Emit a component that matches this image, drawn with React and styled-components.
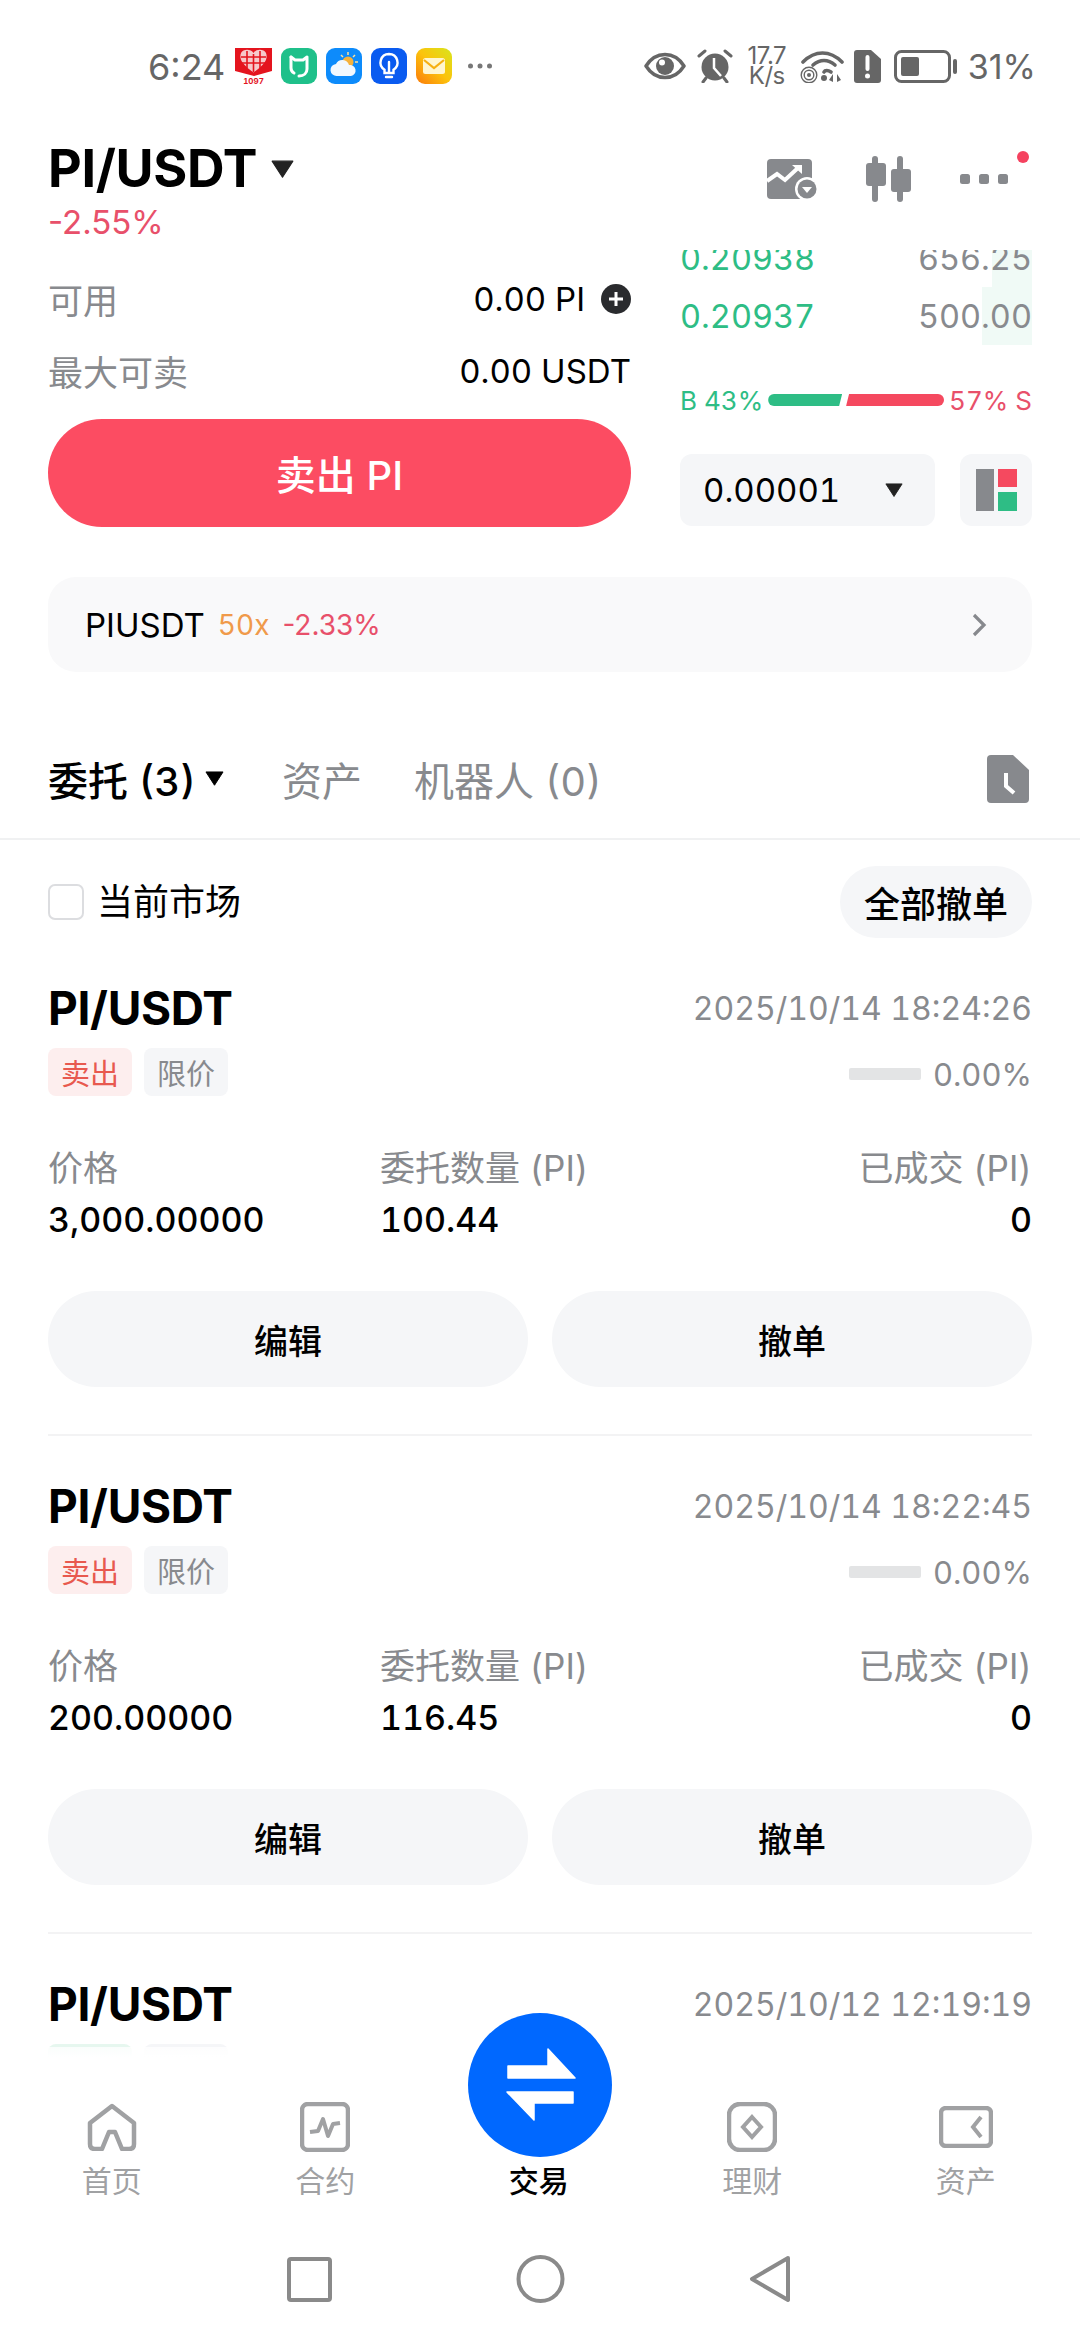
import React from 'react';
import styled, {createGlobalStyle} from 'styled-components';

const GlobalStyle = createGlobalStyle`
    html, body {
        margin: 0;
        padding: 0;
        background: #fff;
    }
    * {
        box-sizing: border-box;
    }
`;

const Page = styled.div`
    position: relative;
    width: 1080px;
    height: 2340px;
    overflow: hidden;
    background: #fff;
    color: #000;
    font-family: Inter, "Noto Sans CJK SC", sans-serif;
    font-variant-numeric: tabular-nums;
`;

const StatusBar = styled.div`
    height: 130px;
    padding: 47px 44px 0 148px;
    display: flex;
    justify-content: space-between;
    align-items: flex-start;
    color: #666;
`;

const StatusGroup = styled.div`
    display: flex;
    align-items: center;
    height: 38px;
    gap: ${p => p.$gap || 9}px;
`;

const Clock = styled.span`
    font-size: 36px;
    line-height: 38px;
    margin: 2px 1px 0 0;
    font-variant-numeric: normal;
`;

const NoticeMore = styled.span`
    display: flex;
    margin-left: 6px;
`;

const Speed = styled.span`
    font-size: 24px;
    line-height: 20px;
    width: 46px;
    text-align: center;
    white-space: nowrap;
    font-variant-numeric: normal;
    letter-spacing: -.5px;
`;

const SimSlot = styled.span`
    display: flex;
    margin-right: 3px;
`;

const BatteryText = styled.span`
    font-size: 34px;
    line-height: 38px;
    margin-top: 2px;
    font-variant-numeric: normal;
`;

const Header = styled.div`
    height: 120px;
    padding: 0 48px;
    display: flex;
    justify-content: space-between;
    align-items: flex-start;
`;

const PairBlock = styled.div`
    display: flex;
    flex-direction: column;
`;

const PairRow = styled.div`
    display: flex;
    align-items: center;
    gap: 14px;
    height: 50px;
    margin-top: 14px;
`;

const PairName = styled.span`
    font-size: 52px;
    font-weight: 700;
    letter-spacing: -.3px;
    line-height: 50px;
`;

const Change = styled.span`
    font-size: 33px;
    line-height: 40px;
    margin-top: 8px;
    color: #e8506a;
    font-variant-numeric: normal;
`;

const HeaderActions = styled.div`
    position: relative;
    display: flex;
    align-items: center;
    gap: 49px;
    height: 48px;
    margin-top: 25px;
    padding-right: 24px;
`;

const AlertDot = styled.span`
    position: absolute;
    top: -4px;
    right: 3px;
    width: 12px;
    height: 12px;
    border-radius: 50%;
    background: #f5425f;
`;

const Trade = styled.div`
    display: grid;
    grid-template-columns: 583px 352px;
    column-gap: 49px;
    padding: 0 48px;
    height: 277px;
    overflow: hidden;
`;

const FormColumn = styled.div`
    padding-top: 12px;
    display: flex;
    flex-direction: column;
`;

const BalanceRow = styled.div`
    height: 72px;
    display: flex;
    align-items: center;
    justify-content: space-between;
`;

const MutedLabel = styled.span`
    font-size: 35px;
    color: #888a8e;
`;

const BalanceValue = styled.span`
    display: flex;
    align-items: center;
    gap: 16px;
    font-size: 33px;
    margin-top: 2px;
    color: #000;
`;

const SellButton = styled.div`
    margin-top: 13px;
    height: 108px;
    border-radius: 54px;
    background: #fc4c62;
    color: #fff;
    font-size: 40px;
    font-weight: 500;
    display: flex;
    align-items: center;
    justify-content: center;
`;

const BookColumn = styled.div`
    margin-top: -21px;
    display: flex;
    flex-direction: column;
`;

const BookRow = styled.div`
    position: relative;
    height: 58px;
    display: flex;
    align-items: center;
    justify-content: space-between;
    font-size: 32.500px;
`;

const DepthBar = styled.span`
    position: absolute;
    top: 0;
    bottom: 0;
    right: 0;
    background: #f0faf6;
`;

const BookPrice = styled.span`
    position: relative;
    color: #2ebd85;
`;

const BookSize = styled.span`
    position: relative;
    color: #888a8e;
`;

const RatioRow = styled.div`
    margin-top: 38px;
    height: 34px;
    display: flex;
    align-items: center;
    justify-content: space-between;
    font-size: 26px;
`;

const RatioText = styled.span`
    color: ${p => p.$color};
    white-space: nowrap;
`;

const RatioBars = styled.div`
    width: 176px;
    display: flex;
    gap: 4px;
`;

const RatioBar = styled.span`
    height: 12px;
    flex: ${p => p.$flex};
    background: ${p => p.$color};
    border-radius: ${p => (p.$side === 'left' ? '6px 0 0 6px' : '0 6px 6px 0')};
    clip-path: ${p => (p.$side === 'left'
        ? 'polygon(0 0, 100% 0, 96% 100%, 0 100%)'
        : 'polygon(3% 0, 100% 0, 100% 100%, 0 100%)')};
`;

const BookControls = styled.div`
    margin-top: 37px;
    display: flex;
    justify-content: space-between;
`;

const PrecisionSelect = styled.div`
    width: 255px;
    height: 72px;
    padding: 0 32px 0 23px;
    background: #f5f6f8;
    border-radius: 12px;
    display: flex;
    align-items: center;
    justify-content: space-between;
    font-size: 33px;
`;

const LayoutButton = styled.div`
    width: 72px;
    height: 72px;
    background: #f5f6f8;
    border-radius: 12px;
    display: flex;
    align-items: center;
    justify-content: center;
`;

const MarketRow = styled.div`
    margin: 50px 48px 0;
    height: 95px;
    padding: 0 45px 0 37px;
    background: #f9f9fa;
    border-radius: 28px;
    display: flex;
    align-items: center;
`;

const MarketName = styled.span`
    font-size: 33px;
`;

const MarketLeverage = styled.span`
    font-size: 28px;
    color: #f09a4a;
    margin-left: 13px;
`;

const MarketChange = styled.span`
    font-size: 28px;
    color: #e8506a;
    margin-left: 13px;
    flex: 1;
    font-variant-numeric: normal;
`;

const Tabs = styled.div`
    margin-top: 48px;
    height: 120px;
    padding: 0 48px;
    border-bottom: 2px solid #f0f1f2;
    display: flex;
    align-items: center;
`;

const Tab = styled.span`
    font-size: 40px;
    font-weight: ${p => (p.$active ? 500 : 400)};
    color: ${p => (p.$active ? '#000' : '#888a8e')};
    margin-right: ${p => p.$gap || 0}px;
    display: flex;
    align-items: center;
    gap: 9px;
`;

const TabEnd = styled.div`
    margin-left: auto;
    margin-right: 3px;
    display: flex;
`;

const FilterRow = styled.div`
    height: 72px;
    margin-top: 26px;
    padding: 0 48px;
    display: flex;
    align-items: center;
    justify-content: space-between;
`;

const CheckLabel = styled.div`
    display: flex;
    align-items: center;
    gap: 13px;
    font-size: 36px;
    line-height: 70px;
`;

const CheckBox = styled.span`
    width: 36px;
    height: 36px;
    border: 2px solid #dcdde0;
    border-radius: 7px;
`;

const Pill = styled.div`
    height: 72px;
    padding: 0 24px;
    border-radius: 36px;
    background: #f5f6f8;
    font-size: 36px;
    font-weight: 500;
    display: flex;
    align-items: center;
`;

const OrderList = styled.div`
    padding: 0 48px;
`;

const OrderCard = styled.div`
    padding: 40px 0 47px;
    border-bottom: 2px solid #f3f3f4;
`;

const SplitRow = styled.div`
    display: flex;
    align-items: center;
    justify-content: space-between;
`;

const OrderTop = styled(SplitRow)`
    height: 60px;
`;

const OrderPair = styled.span`
    font-size: 46px;
    font-weight: 700;
    letter-spacing: -.3px;
`;

const OrderTime = styled.span`
    font-size: 32px;
    color: #888a8e;
`;

const OrderTags = styled(SplitRow)`
    height: 48px;
    margin-top: 10px;
`;

const TagGroup = styled.div`
    display: flex;
    gap: 12px;
`;

const Tag = styled.span`
    width: 84px;
    height: 48px;
    border-radius: 8px;
    font-size: 29px;
    display: flex;
    align-items: center;
    justify-content: center;
    background: ${p => p.$bg};
    color: ${p => p.$color};
`;

const Progress = styled.div`
    display: flex;
    align-items: center;
    gap: 12px;
    font-size: 31px;
    color: #888a8e;
    margin-top: 4px;
`;

const ProgressTrack = styled.span`
    width: 72px;
    height: 12px;
    background: #e3e4e5;
    border-radius: 2px;
`;

const InfoGrid = styled.div`
    margin-top: 47px;
    display: grid;
    grid-template-columns: 332px 1fr 1fr;
    grid-auto-rows: 50px;
    row-gap: 1px;
    align-items: center;
`;

const InfoLabel = styled.span`
    font-size: 35px;
    color: #888a8e;
    margin-top: -6px;
    white-space: nowrap;
    text-align: ${p => p.$align || 'left'};
`;

const InfoValue = styled.span`
    font-size: 34px;
    font-weight: 500;
    text-align: ${p => p.$align || 'left'};
`;

const OrderButtons = styled.div`
    margin-top: 47px;
    display: grid;
    grid-template-columns: 1fr 1fr;
    gap: 24px;
`;

const OrderButton = styled.div`
    height: 96px;
    border-radius: 48px;
    background: #f5f6f8;
    font-size: 34px;
    font-weight: 500;
    display: flex;
    align-items: center;
    justify-content: center;
`;

const BottomArea = styled.div`
    position: absolute;
    left: 0;
    right: 0;
    bottom: 0;
    top: 2047px;
    background: linear-gradient(to bottom, rgba(255, 255, 255, .8) 0, #fff 10px);
`;

const NavBar = styled.div`
    display: grid;
    grid-template-columns: repeat(5, 213.500px);
    padding: 55px 0 0 5px;
`;

const NavItem = styled.div`
    display: flex;
    flex-direction: column;
    align-items: center;
`;

const NavIcon = styled.div`
    height: 50px;
    display: flex;
    align-items: center;
`;

const NavLabel = styled.span`
    font-size: 30px;
    margin-top: 9px;
    line-height: 40px;
    color: ${p => (p.$active ? '#000' : '#a0a1a3')};
    font-weight: ${p => (p.$active ? 500 : 400)};
`;

const TradeFab = styled.div`
    position: absolute;
    left: 468px;
    top: 2013px;
    width: 144px;
    height: 144px;
    border-radius: 50%;
    background: #0068ff;
`;

const SystemNav = styled.div`
    position: absolute;
    left: 0;
    right: 0;
    top: 2255px;
    height: 48px;
    display: flex;
    gap: 184px;
    padding-left: 287px;
`;

const Caret = ({size = 20, color = '#222'}) => (
    <svg width={size} height={size * 0.8} viewBox="0 0 20 16">
        <path d="M1 1h18L10 15z" fill={color} stroke={color} strokeLinejoin="round" strokeWidth="1"/>
    </svg>
);

const Red1097 = () => (
    <svg width="37" height="36" viewBox="0 0 37 36">
        <path d="M0 0h37v23l-18 5-19-5z" fill="#e4141e"/>
        <path d="M18.500 5c2-3.500 7-4 10-2.500 4 2 4 8 1 12-3 4-7 7-11 10-4-3-8-6-11-10-3-4-3-10 1-12 3-1.500 8-1 10 2.500z" fill="#f6c9cb"/>
        <path d="M12 3v17M18.500 6v18M25 3v17M6 9h25M7 15h23" stroke="#e4141e" strokeWidth="1.600"/>
        <text x="18.500" y="35.500" textAnchor="middle" fontSize="8" fontWeight="700" fill="#e4141e" fontFamily="Inter">1097</text>
    </svg>
);

const MiIcon = () => (
    <svg width="36" height="36" viewBox="0 0 36 36">
        <rect width="36" height="36" rx="9" fill="#1fc08a"/>
        <path d="M10 9l4 3h8l4-3v12c0 4-3 7-8 7" fill="none" stroke="#fff" strokeWidth="3" strokeLinejoin="round" strokeLinecap="round"/>
        <path d="M10 9v11c0 2 1 4 3 5" fill="none" stroke="#fff" strokeWidth="3" strokeLinecap="round"/>
    </svg>
);

const WeatherIcon = () => (
    <svg width="36" height="36" viewBox="0 0 36 36">
        <rect width="36" height="36" rx="9" fill="#0d8bfb"/>
        <circle cx="22" cy="14" r="5.500" fill="#f5b23c"/>
        <path d="M22 4v3M29 7l-2 2M32 14h-3M15 7l2 2" stroke="#ffe29a" strokeWidth="1.500"/>
        <path d="M11 28a6 6 0 0 1-1-12 7 7 0 0 1 13 1 5.500 5.500 0 0 1 2 11z" fill="#f2f8fe"/>
    </svg>
);

const BulbIcon = () => (
    <svg width="36" height="36" viewBox="0 0 36 36">
        <rect width="36" height="36" rx="9" fill="#0a5bf0"/>
        <path d="M18 6a8.500 8.500 0 0 0-4.500 15.700V25h9v-3.300A8.500 8.500 0 0 0 18 6z" fill="none" stroke="#fff" strokeWidth="2.400"/>
        <path d="M18 14v10M15 29h6" stroke="#fff" strokeWidth="2.400" strokeLinecap="round"/>
    </svg>
);

const MailIcon = () => (
    <svg width="36" height="36" viewBox="0 0 36 36">
        <defs>
            <linearGradient id="mailFill" x1="1" y1="0" x2="0" y2="1">
                <stop offset="0" stopColor="#d8e51c"/>
                <stop offset=".5" stopColor="#fcc30c"/>
                <stop offset="1" stopColor="#fb7a0a"/>
            </linearGradient>
        </defs>
        <rect width="36" height="36" rx="9" fill="url(#mailFill)"/>
        <rect x="7" y="10" width="22" height="16" rx="2.500" fill="#fff6cf"/>
        <path d="M8 12l10 8 10-8" fill="none" stroke="#f6b012" strokeWidth="2.200"/>
    </svg>
);

const MoreDots = () => (
    <svg width="26" height="8" viewBox="0 0 26 8">
        <circle cx="3.500" cy="4" r="2.500" fill="#777"/>
        <circle cx="13" cy="4" r="2.500" fill="#777"/>
        <circle cx="22.500" cy="4" r="2.500" fill="#777"/>
    </svg>
);

const EyeIcon = () => (
    <svg width="42" height="28" viewBox="0 0 42 28">
        <path d="M2 14C7 6 13 2.500 21 2.500S35 6 40 14c-5 8-11 11.500-19 11.500S7 22 2 14z" fill="none" stroke="#666" strokeWidth="3.500" strokeLinejoin="round"/>
        <circle cx="21" cy="14" r="9" fill="#666"/>
        <circle cx="18" cy="10.500" r="3" fill="#fff"/>
    </svg>
);

const AlarmIcon = () => (
    <svg width="38" height="34" viewBox="0 0 38 34">
        <circle cx="19" cy="18" r="13.500" fill="#666"/>
        <path d="M18 9v10l7 8" fill="none" stroke="#fff" strokeWidth="2.500"/>
        <path d="M3 7l6-5M35 7l-6-5M7 33l3-4M31 33l-3-4" stroke="#666" strokeWidth="3" strokeLinecap="round"/>
    </svg>
);

const WifiIcon = () => (
    <svg width="44" height="34" viewBox="0 0 44 34">
        <path d="M3 13C15 1 30 1 42 13" fill="none" stroke="#666" strokeWidth="3.600" strokeLinecap="round"/>
        <path d="M13 16c7-6 15-6 22 0" fill="none" stroke="#666" strokeWidth="3.600" strokeLinecap="round"/>
        <path d="M24 23c1-2 4-2 7 0" fill="none" stroke="#666" strokeWidth="3.600" strokeLinecap="round"/>
        <circle cx="9" cy="26" r="2" fill="#666"/>
        <circle cx="9" cy="26" r="4.800" fill="none" stroke="#666" strokeWidth="1.400"/>
        <circle cx="9" cy="26" r="7.800" fill="none" stroke="#666" strokeWidth="1.400"/>
        <circle cx="24" cy="29" r="3" fill="#666"/>
        <path d="M33 25v8l-4-2zM37 25v8l4-2z" fill="#666"/>
    </svg>
);

const SimAlert = () => (
    <svg width="27" height="33" viewBox="0 0 27 33">
        <path d="M3 0h14l10 9v21a3 3 0 0 1-3 3H3a3 3 0 0 1-3-3V3a3 3 0 0 1 3-3z" fill="#666"/>
        <path d="M13.500 7v12" stroke="#fff" strokeWidth="4" strokeLinecap="round"/>
        <circle cx="13.500" cy="26" r="2.500" fill="#fff"/>
    </svg>
);

const BatteryIcon = () => (
    <svg width="64" height="33" viewBox="0 0 64 33">
        <rect x="1.500" y="1.500" width="54" height="30" rx="6" fill="none" stroke="#666" strokeWidth="3"/>
        <rect x="7" y="7" width="18" height="19" rx="2" fill="#666"/>
        <rect x="59" y="9" width="4" height="15" rx="2" fill="#666"/>
    </svg>
);

const ChartIcon = () => (
    <svg width="50" height="40" viewBox="0 0 50 40">
        <rect width="45" height="40" rx="4" fill="#87898d"/>
        <path d="M0 22l10-7 8 6 14-13" fill="none" stroke="#fff" strokeWidth="4"/>
        <path d="M25 6h10v9z" fill="#fff"/>
        <circle cx="40" cy="30" r="12" fill="#fff"/>
        <circle cx="40" cy="30" r="9.500" fill="#87898d"/>
        <path d="M35 28h10l-5 6z" fill="#fff"/>
    </svg>
);

const CandleIcon = () => (
    <svg width="45" height="46" viewBox="0 0 45 46">
        <rect x="6" width="6" height="46" rx="3" fill="#87898d"/>
        <rect y="7" width="20" height="23" rx="3" fill="#87898d"/>
        <rect x="31" width="6" height="46" rx="3" fill="#87898d"/>
        <rect x="25" y="13" width="20" height="23" rx="3" fill="#87898d"/>
    </svg>
);

const MoreIcon = () => (
    <svg width="48" height="10" viewBox="0 0 48 10">
        <rect width="10" height="10" rx="2.500" fill="#87898d"/>
        <rect x="19" width="10" height="10" rx="2.500" fill="#87898d"/>
        <rect x="38" width="10" height="10" rx="2.500" fill="#87898d"/>
    </svg>
);

const PlusCircle = () => (
    <svg width="30" height="30" viewBox="0 0 30 30">
        <circle cx="15" cy="15" r="15" fill="#2a2b2e"/>
        <path d="M15 8v14M8 15h14" stroke="#fff" strokeWidth="3"/>
    </svg>
);

const LayoutIcon = () => (
    <svg width="41" height="42" viewBox="0 0 41 42">
        <rect width="18" height="42" fill="#87898d"/>
        <rect x="22" width="19" height="18" fill="#f5495f"/>
        <rect x="22" y="23" width="19" height="19" fill="#2ebd85"/>
    </svg>
);

const Chevron = () => (
    <svg width="16" height="24" viewBox="0 0 16 24">
        <path d="M3 2l10 10L3 22" fill="none" stroke="#87898d" strokeWidth="3.200"/>
    </svg>
);

const HistoryIcon = () => (
    <svg width="42" height="48" viewBox="0 0 42 48">
        <path d="M4 0h22l16 15v29a4 4 0 0 1-4 4H4a4 4 0 0 1-4-4V4a4 4 0 0 1 4-4z" fill="#87898d"/>
        <path d="M19 18v13l8 7" fill="none" stroke="#fff" strokeWidth="4"/>
    </svg>
);

const HomeIcon = () => (
    <svg width="50" height="48" viewBox="0 0 50 48">
        <path d="M25 3L47 20V41Q47 46 42 46H35L28 29H22L15 46H8Q3 46 3 41V20Z" fill="none" stroke="#a0a1a3" strokeWidth="4.500" strokeLinejoin="round"/>
    </svg>
);

const ContractIcon = () => (
    <svg width="50" height="50" viewBox="0 0 50 50">
        <rect x="2" y="2" width="46" height="46" rx="6" fill="none" stroke="#a0a1a3" strokeWidth="4.500"/>
        <path d="M10 30l8-1 5-12 5 17 5-12 7-1" fill="none" stroke="#a0a1a3" strokeWidth="4" strokeLinejoin="round"/>
    </svg>
);

const WealthIcon = () => (
    <svg width="50" height="50" viewBox="0 0 50 50">
        <rect x="2" y="2" width="46" height="46" rx="11" fill="none" stroke="#a0a1a3" strokeWidth="4.500"/>
        <path d="M25 15l9 10-9 10-9-10z" fill="none" stroke="#a0a1a3" strokeWidth="4"/>
    </svg>
);

const AssetIcon = () => (
    <svg width="54" height="42" viewBox="0 0 54 42">
        <rect x="2" y="2" width="50" height="38" rx="5" fill="none" stroke="#a0a1a3" strokeWidth="4.500"/>
        <path d="M42 11l-8 10 8 10" fill="none" stroke="#a0a1a3" strokeWidth="4"/>
    </svg>
);

const SwapIcon = () => (
    <svg width="144" height="144" viewBox="0 0 144 144">
        <path d="M40 53H80V36L107 65H40Z" fill="#fff" stroke="#fff" strokeWidth="1.500" strokeLinejoin="round"/>
        <path d="M105 79H39L66 107V90H105Z" fill="#fff" stroke="#fff" strokeWidth="1.500" strokeLinejoin="round"/>
    </svg>
);

const orders = [
    {time: '2025/10/14 18:24:26', price: '3,000.00000', qty: '100.44'},
    {time: '2025/10/14 18:22:45', price: '200.00000', qty: '116.45'},
];

const navItems = [
    {label: '首页', icon: <HomeIcon/>},
    {label: '合约', icon: <ContractIcon/>},
    {label: '交易', active: true},
    {label: '理财', icon: <WealthIcon/>},
    {label: '资产', icon: <AssetIcon/>},
];

export default function App() {
    return (
        <Page>
            <GlobalStyle/>
            <StatusBar>
                <StatusGroup>
                    <Clock>6:24</Clock>
                    <Red1097/>
                    <MiIcon/>
                    <WeatherIcon/>
                    <BulbIcon/>
                    <MailIcon/>
                    <NoticeMore><MoreDots/></NoticeMore>
                </StatusGroup>
                <StatusGroup $gap={10}>
                    <EyeIcon/>
                    <AlarmIcon/>
                    <Speed>17.7<br/>K/s</Speed>
                    <WifiIcon/>
                    <SimSlot><SimAlert/></SimSlot>
                    <BatteryIcon/>
                    <BatteryText>31%</BatteryText>
                </StatusGroup>
            </StatusBar>
            <Header>
                <PairBlock>
                    <PairRow>
                        <PairName>PI/USDT</PairName>
                        <Caret size={23}/>
                    </PairRow>
                    <Change>-2.55%</Change>
                </PairBlock>
                <HeaderActions>
                    <ChartIcon/>
                    <CandleIcon/>
                    <MoreIcon/>
                    <AlertDot/>
                </HeaderActions>
            </Header>
            <Trade>
                <FormColumn>
                    <BalanceRow>
                        <MutedLabel>可用</MutedLabel>
                        <BalanceValue>0.00 PI <PlusCircle/></BalanceValue>
                    </BalanceRow>
                    <BalanceRow>
                        <MutedLabel>最大可卖</MutedLabel>
                        <BalanceValue>0.00 USDT</BalanceValue>
                    </BalanceRow>
                    <SellButton>卖出 PI</SellButton>
                </FormColumn>
                <BookColumn>
                    <BookRow>
                        <DepthBar style={{width: 40}}/>
                        <BookPrice>0.20938</BookPrice>
                        <BookSize>656.25</BookSize>
                    </BookRow>
                    <BookRow>
                        <DepthBar style={{width: 50}}/>
                        <BookPrice>0.20937</BookPrice>
                        <BookSize>500.00</BookSize>
                    </BookRow>
                    <RatioRow>
                        <RatioText $color="#2ebd85">B 43%</RatioText>
                        <RatioBars>
                            <RatioBar $side="left" $flex={43} $color="#2ebd85"/>
                            <RatioBar $side="right" $flex={57} $color="#f5495f"/>
                        </RatioBars>
                        <RatioText $color="#e8506a">57% S</RatioText>
                    </RatioRow>
                    <BookControls>
                        <PrecisionSelect>
                            0.00001
                            <Caret size={18}/>
                        </PrecisionSelect>
                        <LayoutButton><LayoutIcon/></LayoutButton>
                    </BookControls>
                </BookColumn>
            </Trade>
            <MarketRow>
                <MarketName>PIUSDT</MarketName>
                <MarketLeverage>50x</MarketLeverage>
                <MarketChange>-2.33%</MarketChange>
                <Chevron/>
            </MarketRow>
            <Tabs>
                <Tab $active $gap={58}>委托 (3) <Caret size={19} color="#000"/></Tab>
                <Tab $gap={52}>资产</Tab>
                <Tab>机器人 (0)</Tab>
                <TabEnd><HistoryIcon/></TabEnd>
            </Tabs>
            <FilterRow>
                <CheckLabel><CheckBox/>当前市场</CheckLabel>
                <Pill>全部撤单</Pill>
            </FilterRow>
            <OrderList>
                {orders.map(order => (
                    <OrderCard key={order.time}>
                        <OrderTop>
                            <OrderPair>PI/USDT</OrderPair>
                            <OrderTime>{order.time}</OrderTime>
                        </OrderTop>
                        <OrderTags>
                            <TagGroup>
                                <Tag $bg="#fdeeee" $color="#e8594f">卖出</Tag>
                                <Tag $bg="#f5f6f8" $color="#888a8e">限价</Tag>
                            </TagGroup>
                            <Progress><ProgressTrack/>0.00%</Progress>
                        </OrderTags>
                        <InfoGrid>
                            <InfoLabel>价格</InfoLabel>
                            <InfoLabel>委托数量 (PI)</InfoLabel>
                            <InfoLabel $align="right">已成交 (PI)</InfoLabel>
                            <InfoValue>{order.price}</InfoValue>
                            <InfoValue>{order.qty}</InfoValue>
                            <InfoValue $align="right">0</InfoValue>
                        </InfoGrid>
                        <OrderButtons>
                            <OrderButton>编辑</OrderButton>
                            <OrderButton>撤单</OrderButton>
                        </OrderButtons>
                    </OrderCard>
                ))}
                <OrderCard>
                    <OrderTop>
                        <OrderPair>PI/USDT</OrderPair>
                        <OrderTime>2025/10/12 12:19:19</OrderTime>
                    </OrderTop>
                    <OrderTags>
                        <TagGroup>
                            <Tag $bg="#e6f7ef"/>
                            <Tag $bg="#f5f6f8"/>
                        </TagGroup>
                    </OrderTags>
                </OrderCard>
            </OrderList>
            <BottomArea>
                <NavBar>
                    {navItems.map(item => (
                        <NavItem key={item.label}>
                            <NavIcon>{item.icon}</NavIcon>
                            <NavLabel $active={item.active}>{item.label}</NavLabel>
                        </NavItem>
                    ))}
                </NavBar>
            </BottomArea>
            <TradeFab><SwapIcon/></TradeFab>
            <SystemNav>
                <svg width="45" height="48" viewBox="0 0 45 48">
                    <rect x="2" y="4" width="41" height="41" rx="2" fill="none" stroke="#8a8a8a" strokeWidth="4"/>
                </svg>
                <svg width="49" height="48" viewBox="0 0 49 48">
                    <circle cx="24.500" cy="24" r="22" fill="none" stroke="#8a8a8a" strokeWidth="4"/>
                </svg>
                <svg width="42" height="48" viewBox="0 0 42 48">
                    <path d="M39 3L3 24l36 21z" fill="none" stroke="#8a8a8a" strokeWidth="4" strokeLinejoin="round"/>
                </svg>
            </SystemNav>
        </Page>
    );
}
